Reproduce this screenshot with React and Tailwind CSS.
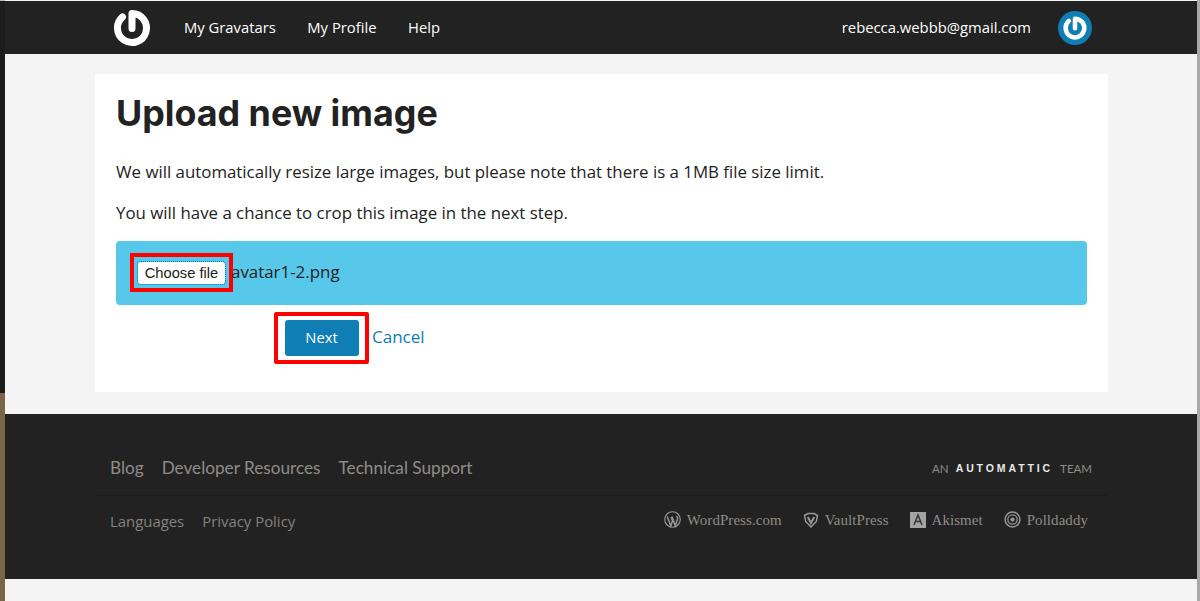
import React from "react";

const Logo = ({ className, bg }) => (
  <svg viewBox="0 0 38 38" className={className}>
    {bg && <circle cx="19" cy="19" r="19" fill={bg} />}
    <g transform={bg ? "translate(19 19) scale(0.72) translate(-19 -19)" : undefined}>
      <path d="M19 19.5 V4.5 A14.5 14.5 0 1 1 9.5 8" fill="none" stroke="#fff" strokeWidth="7" strokeLinecap="round" strokeLinejoin="round" />
    </g>
  </svg>
);

const FooterBrand = ({ icon, label }) => (
  <a className="flex items-center gap-[6px] text-[#8f8c88]">
    {icon}
    <span className="font-['Liberation_Serif',serif] text-[14.9px] tracking-[0.1px]">{label}</span>
  </a>
);

export default function App() {
  return (
    <div className="flex h-[601px] w-[1200px] overflow-hidden bg-[#f4f4f4] font-['Open_Sans',sans-serif] text-[#222]">
      <div className="flex w-[5px] flex-col bg-[#1c1c1c]">
        <div className="h-px bg-[#bbb]" />
        <div className="flex-1" />
        <div className="h-[208px] bg-[#7a6548]" />
      </div>
      <div className="flex w-[1192px] flex-col">
        <header className="mt-px flex h-[53px] items-center bg-[#222] pl-[108px] pr-[105px] text-white">
          <Logo className="h-[38px] w-[38px]" />
          <nav className="ml-[33px] flex gap-[31.5px] text-[14.8px]">
            <a>My Gravatars</a>
            <a>My Profile</a>
            <a>Help</a>
          </nav>
          <span className="ml-auto text-[14.8px]">rebecca.webbb@gmail.com</span>
          <Logo className="ml-[27px] h-[34px] w-[34px]" bg="#0e7eb5" />
        </header>
        <main className="flex-1 px-[90px] pb-[22px] pt-[20px]">
          <div className="h-[318px] w-[1013px] bg-white px-[21px] pt-[16px]">
            <h1 className="font-['Inter',sans-serif] text-[35.8px] font-bold leading-[46px] text-[#222]">Upload new image</h1>
            <p className="mt-[24px] text-[16.85px] leading-[24px]">We will automatically resize large images, but please note that there is a 1MB file size limit.</p>
            <p className="mt-[17px] text-[16.85px] leading-[24px]">You will have a chance to crop this image in the next step.</p>
            <div className="mt-[16px] flex h-[64px] w-[971px] items-center rounded-[4px] bg-[#57c7ea] pl-[14px]">
              <div className="-mt-[1px] flex h-[39px] w-[103px] items-center justify-center border-4 border-[#f00] bg-[#57c7ea]">
                <button className="h-[22px] w-[87px] rounded-[3px] bg-white font-['Liberation_Sans',sans-serif] text-[14.7px] leading-[22px] text-[#222] outline-1 outline-dotted outline-[#0e7eb5]">Choose file</button>
              </div>
              <span className="-mt-[2px] ml-[-2px] text-[16.9px]">avatar1-2.png</span>
            </div>
            <div className="ml-[158px] mt-[7px] flex items-center gap-[3px]">
              <div className="flex h-[52px] w-[95px] items-center justify-center rounded-[2px] border-[4px] border-[#f00]">
                <button className="h-[36px] w-[74px] rounded-[3px] bg-[#0e7eb5] pb-[2px] text-[14.8px] font-medium text-white">Next</button>
              </div>
              <a className="-mt-[3px] text-[17px] text-[#0e7eb5]">Cancel</a>
            </div>
          </div>
        </main>
        <footer className="h-[165px] bg-[#222] px-[90px] pt-[40px]">
          <div className="flex h-[42px] items-start justify-between border-b border-[#1b1b1b] pl-[15px] pr-[15px]">
            <div className="flex gap-[18px] font-['Lato',sans-serif] text-[17.2px] leading-[28px] text-[#8f8c88]">
              <a>Blog</a>
              <a>Developer Resources</a>
              <a>Technical Support</a>
            </div>
            <div className="flex items-center gap-[7px] pt-[7px] font-['Lato',sans-serif] text-[11.5px] leading-[15px] text-[#8f8c88]">
              <span>AN</span>
              <span className="font-['Liberation_Sans',sans-serif] text-[10.5px] font-bold tracking-[2.9px] text-[#e8e8e8]">AUTOMATTIC</span>
              <span>TEAM</span>
            </div>
          </div>
          <div className="flex items-center justify-between pl-[15px] pr-[16px] pt-[13px]">
            <div className="flex gap-[18px] text-[14.9px] leading-[24px] text-[#84817e]">
              <a>Languages</a>
              <a>Privacy Policy</a>
            </div>
            <div className="-mt-[2px] flex items-center gap-[21px] pr-[3px]">
              <FooterBrand label="WordPress.com" icon={
                <svg viewBox="0 0 16 16" className="h-[17px] w-[17px]"><circle cx="8" cy="8" r="7.3" fill="none" stroke="#99979a" strokeWidth="1.1"/><path d="M3 5.2 6.4 14 8 9.4 6.8 5.6M7.4 5.2 10.6 14 12.6 8c.5-1.6-.2-2.8-.9-3" fill="none" stroke="#99979a" strokeWidth="1.4"/></svg>} />
              <FooterBrand label="VaultPress" icon={
                <svg viewBox="0 0 16 16" className="h-[16px] w-[16px]"><path d="M1.5 3.5 5 1.5h6l3.5 2-1.2 6L8 15l-5.3-5.5z" fill="none" stroke="#99979a" strokeWidth="1.5"/><path d="M4.8 5 8 11l3.2-6" fill="none" stroke="#99979a" strokeWidth="2"/></svg>} />
              <FooterBrand label="Akismet" icon={
                <svg viewBox="0 0 16 16" className="h-[16px] w-[16px]"><rect width="16" height="16" fill="#a3a3a3"/><path d="M4 13 8 3l4 10M5.6 9.5h4.8" fill="none" stroke="#333" strokeWidth="1.4"/></svg>} />
              <FooterBrand label="Polldaddy" icon={
                <svg viewBox="0 0 16 16" className="h-[17px] w-[17px]"><circle cx="8" cy="8" r="7" fill="none" stroke="#99979a" strokeWidth="1.4"/><circle cx="8" cy="8" r="4.4" fill="none" stroke="#99979a" strokeWidth="1.2"/><circle cx="8" cy="8" r="2" fill="#99979a"/></svg>} />
            </div>
          </div>
        </footer>
        <div className="h-[22px]" />
      </div>
      <div className="w-[3px] bg-[#a8a8a8]" />
    </div>
  );
}
